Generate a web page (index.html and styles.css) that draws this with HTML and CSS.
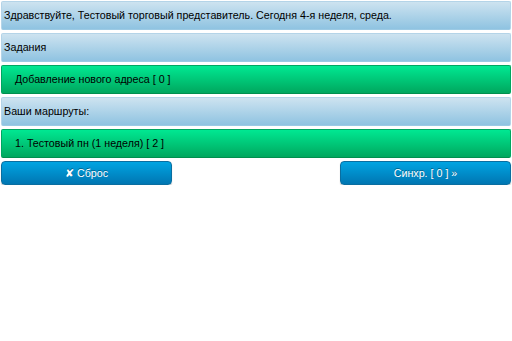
FILE: index.html
```html
<!DOCTYPE html>
<html lang="ru">
<head>
<meta charset="utf-8">
<link rel="stylesheet" href="styles.css">
</head>
<body>
<div class="page">
  <div class="bar info">Здравствуйте, Тестовый торговый представитель. Сегодня 4-я неделя, среда.</div>
  <div class="bar info">Задания</div>
  <div class="bar item">Добавление нового адреса [ 0 ]</div>
  <div class="bar info">Ваши маршруты:</div>
  <div class="bar item">1. Тестовый пн (1 неделя) [ 2 ]</div>
  <div class="actions">
    <div class="btn">✘ Сброс</div>
    <div class="btn">Синхр. [ 0 ] »</div>
  </div>
</div>
</body>
</html>
```
FILE: styles.css
```css
html, body {
  margin: 0;
  padding: 0;
  background: #fff;
}
body {
  font-family: "Liberation Sans", Arial, sans-serif;
  font-size: 10.7px;
  color: #000;
}
.page {
  padding: 1px 1px 0 1px;
  display: flex;
  flex-direction: column;
  gap: 3px;
}
.bar {
  box-sizing: border-box;
  display: flex;
  align-items: center;
  border-radius: 2px;
  padding-bottom: 1px;
}
.info {
  height: 29px;
  padding-left: 2px;
  background: linear-gradient(#cde3f0, #8fc3e1);
  border: 1px solid #b4d4e8;
  border-bottom-color: #9ccae4;
}
.item {
  height: 29px;
  padding-left: 13px;
  background: linear-gradient(#00e892, #00a75e);
  border: 1px solid #00a660;
  border-bottom-color: #008f4e;
}
.actions {
  display: flex;
  justify-content: space-between;
}
.btn {
  width: 171px;
  height: 24px;
  box-sizing: border-box;
  display: flex;
  align-items: center;
  justify-content: center;
  color: #fff;
  text-shadow: 0 -1px 0 rgba(0,0,0,0.35);
  background: linear-gradient(#00a4e2, #0076b2);
  border: 1px solid #0a6ea0;
  border-radius: 4px;
  box-shadow: 0 1px 1px rgba(0,0,0,0.25);
}
```
